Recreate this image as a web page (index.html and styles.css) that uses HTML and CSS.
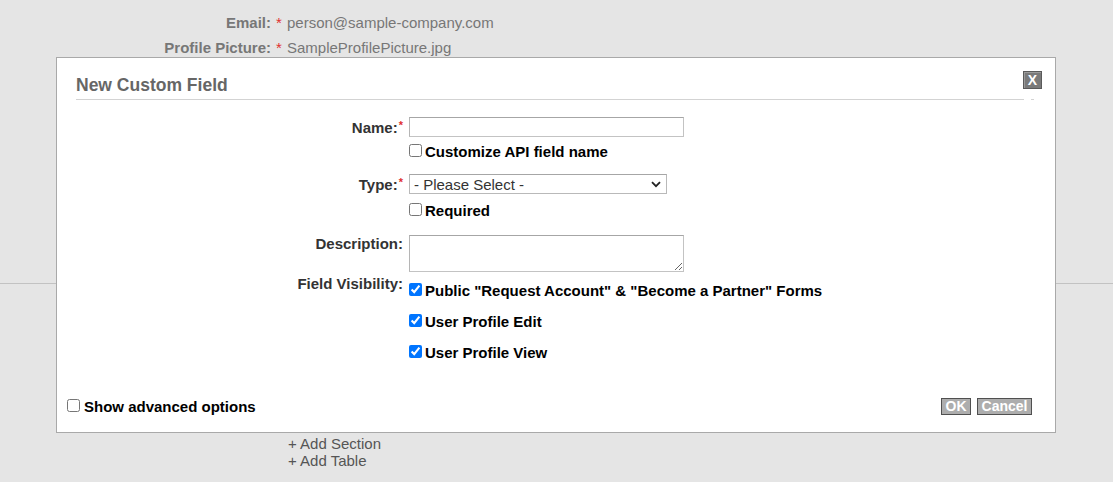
FILE: index.html
```html
<!DOCTYPE html>
<html>
<head>
<meta charset="utf-8">
<link rel="stylesheet" href="styles.css">
</head>
<body>
<div class="page">
  <div class="info">
    <div class="info-row"><span class="info-label">Email:</span><span class="info-req">*</span><span class="info-value">person@sample-company.com</span></div>
    <div class="info-row"><span class="info-label">Profile Picture:</span><span class="info-req">*</span><span class="info-value">SampleProfilePicture.jpg</span></div>
  </div>
  <div class="section-area"></div>
  <div class="add-links">
    <div class="add-link">+ Add Section</div>
    <div class="add-link">+ Add Table</div>
  </div>
</div>

<div class="dialog">
  <div class="dialog-header">
    <h2 class="dialog-title">New Custom Field</h2>
    <button class="close-btn" type="button">X</button>
  </div>
  <div class="header-rule"><span class="rule-line"></span><span class="rule-dot"></span></div>

  <div class="form">
    <div class="form-row name-row">
      <div class="form-label">Name:<span class="req">*</span></div>
      <div class="form-field">
        <input class="text-input" type="text">
        <label class="check-line sub"><input type="checkbox">Customize API field name</label>
      </div>
    </div>

    <div class="form-row type-row">
      <div class="form-label">Type:<span class="req">*</span></div>
      <div class="form-field">
        <span class="select-wrap">
          <select class="select-input"><option>- Please Select -</option></select>
          <svg class="chevron" width="10" height="7" viewBox="0 0 10 7"><path d="M1 1.2 L5 5.2 L9 1.2" fill="none" stroke="#222" stroke-width="1.8"/></svg>
        </span>
        <label class="check-line sub sub2"><input type="checkbox">Required</label>
      </div>
    </div>

    <div class="form-row desc-row">
      <div class="form-label">Description:</div>
      <div class="form-field">
        <textarea class="textarea-input"></textarea>
      </div>
    </div>

    <div class="form-row vis-row">
      <div class="form-label">Field Visibility:</div>
      <div class="form-field vis-field">
        <label class="check-line vis"><input type="checkbox" checked>Public "Request Account" &amp; "Become a Partner" Forms</label>
        <label class="check-line vis"><input type="checkbox" checked>User Profile Edit</label>
        <label class="check-line vis"><input type="checkbox" checked>User Profile View</label>
      </div>
    </div>
  </div>

  <div class="dialog-footer">
    <label class="check-line adv"><input type="checkbox">Show advanced options</label>
    <div class="buttons">
      <button class="btn ok" type="button">OK</button>
      <button class="btn cancel" type="button">Cancel</button>
    </div>
  </div>
</div>
</body>
</html>
```

FILE: styles.css
```css
html, body {
  margin: 0;
  padding: 0;
}
body {
  background: #e5e5e5;
  font-family: "Liberation Sans", Arial, sans-serif;
  font-size: 15px;
  width: 1113px;
  height: 482px;
  overflow: hidden;
}
.page {
  display: flex;
  flex-direction: column;
}
.info {
  padding-top: 10px;
}
.info-row {
  display: flex;
  line-height: 25px;
  height: 25px;
  color: #777;
}
.info-label {
  width: 271px;
  text-align: right;
  font-weight: bold;
}
.info-req {
  color: #e03030;
  margin-left: 5px;
  width: 11px;
}
.info-value {
  color: #777;
}
.section-area {
  height: 223px;
  border-bottom: 1px solid #c2c2c2;
}
.add-links {
  padding-left: 288px;
  margin-top: 151px;
  color: #555;
  line-height: 17px;
}

.dialog {
  position: absolute;
  left: 56px;
  top: 57px;
  width: 998px;
  height: 374px;
  background: #fff;
  border: 1px solid #a9a9a9;
  display: flex;
  flex-direction: column;
}
.dialog-header {
  display: flex;
  justify-content: space-between;
  align-items: flex-start;
  padding: 13px 13px 0 19px;
  height: 28px;
}
.dialog-title {
  margin: 0;
  padding-top: 3px;
  font-size: 17.5px;
  font-weight: bold;
  color: #666;
  line-height: 22px;
}
.close-btn {
  width: 19px;
  height: 18px;
  padding: 0;
  background: #7a7a7a;
  border: 1px solid #5a5a5a;
  color: #fff;
  font-family: "Liberation Sans", Arial, sans-serif;
  font-weight: bold;
  font-size: 14px;
  line-height: 16px;
  box-shadow: inset 1px 1px 0 #9a9a9a;
}
.header-rule {
  display: flex;
  align-items: center;
  padding-left: 19px;
  height: 1px;
}
.rule-line {
  width: 948px;
  height: 1px;
  background: #d3d3d3;
}
.rule-dot {
  width: 3px;
  height: 1px;
  background: #d3d3d3;
  margin-left: 7px;
}

.form {
  display: flex;
  flex-direction: column;
}
.form-row {
  display: flex;
  gap: 6px;
  align-items: flex-start;
}
.name-row { margin-top: 17px; }
.type-row { margin-top: 14px; }
.desc-row { margin-top: 16px; }
.vis-row { margin-top: 3px; }

.form-label {
  width: 346px;
  flex: none;
  text-align: right;
  font-weight: bold;
  color: #333;
  line-height: 17px;
}
.req {
  color: #e03030;
  font-size: 11px;
  vertical-align: 4px;
  margin-left: 1px;
}
.form-field {
  display: flex;
  flex-direction: column;
  align-items: flex-start;
}
.text-input {
  box-sizing: border-box;
  width: 275px;
  height: 20px;
  margin: 0;
  border: 1px solid #c3c3c3;
  border-top-color: #a6a6a6;
  border-left-color: #b5b5b5;
  padding: 1px 3px;
  font-family: "Liberation Sans", Arial, sans-serif;
  font-size: 15px;
}
.check-line {
  display: block;
  font-weight: bold;
  color: #000;
  line-height: 17px;
  white-space: nowrap;
}
.check-line input {
  width: 13px;
  height: 13px;
  margin: 0 3px 0 0;
  vertical-align: 0px;
}
.check-line.sub {
  margin-top: 6px;
}
.check-line.sub2 {
  margin-top: 8px;
}
.select-wrap {
  position: relative;
  display: block;
  width: 258px;
  height: 20px;
}
.select-input {
  box-sizing: border-box;
  -webkit-appearance: none;
  appearance: none;
  width: 258px;
  height: 20px;
  margin: 0;
  border: 1px solid #b9b9b9;
  border-top-color: #a6a6a6;
  border-radius: 0;
  background: #fff;
  font-family: "Liberation Sans", Arial, sans-serif;
  font-size: 15px;
  color: #333;
  padding: 0 4px;
}
.chevron {
  position: absolute;
  right: 6px;
  top: 7px;
  pointer-events: none;
}
.textarea-input {
  box-sizing: border-box;
  width: 275px;
  height: 37px;
  margin: 0;
  border: 1px solid #c3c3c3;
  border-top-color: #a6a6a6;
  border-left-color: #b5b5b5;
  font-family: "Liberation Sans", Arial, sans-serif;
  font-size: 15px;
}
.vis-field {
  padding-top: 7px;
  gap: 14px;
}

.dialog-footer {
  display: flex;
  justify-content: space-between;
  align-items: center;
  padding: 0 23px 0 10px;
  margin-top: auto;
  margin-bottom: 17px;
}
.check-line.adv input {
  margin-right: 4px;
}
.buttons {
  display: flex;
  gap: 6px;
}
.btn {
  height: 17px;
  padding: 0;
  background: #adadad;
  border: 1px solid #505050;
  border-radius: 0;
  color: #fff;
  font-family: "Liberation Sans", Arial, sans-serif;
  font-weight: bold;
  font-size: 14px;
  line-height: 15px;
}
.btn.ok {
  width: 30px;
}
.btn.cancel {
  width: 55px;
}
```
